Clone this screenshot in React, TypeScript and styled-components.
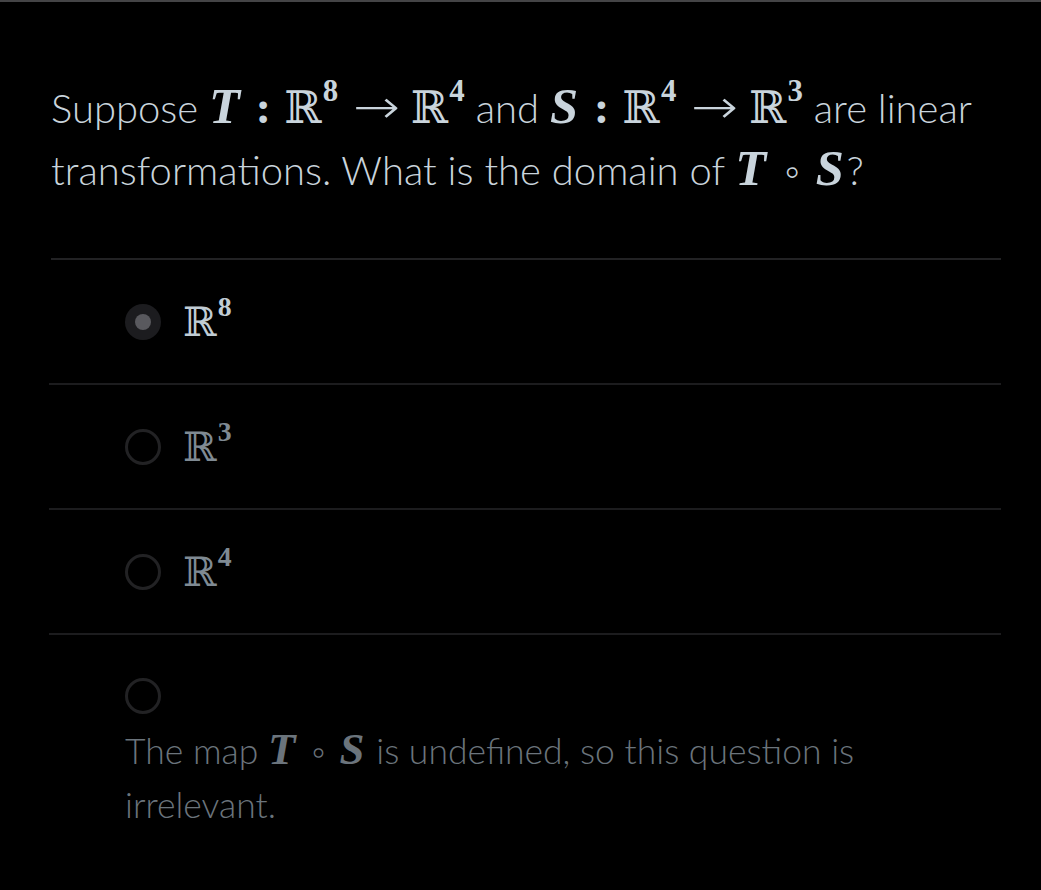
import React from "react";
import styled, { createGlobalStyle } from "styled-components";

const Global = createGlobalStyle`
  html, body { margin: 0; padding: 0; background: #000; }
  body { font-family: "Lato Light", Lato, "Open Sans", sans-serif; }
`;

const Page = styled.div`
  min-height: 890px;
  box-sizing: border-box;
  background: #000;
  border-top: 2px solid #444446;
  padding: 75px 40px 0 49px;
`;

const Question = styled.p`
  margin: 0 0 0 2px;
  font-weight: 300;
  font-size: 40px;
  line-height: 62px;
  color: #c9d4dc;
  padding-bottom: 57px;
  border-bottom: 2px solid #222224;
`;

const MathSpan = styled.span`
  font-family: "Liberation Serif", "DejaVu Serif", serif;
  font-size: 1.17em;
  line-height: 0;
  white-space: nowrap;
`;

const Var = styled.span`
  font-family: "Liberation Serif", serif;
  font-style: italic;
  font-weight: 700;
  font-size: 1.08em;
  margin-right: 0.05em;
`;

const Bb = styled.span`
  font-family: "DejaVu Serif", serif;
  font-weight: 400;
  font-size: 0.96em;
`;

const Sup = styled.span`
  font-family: "Liberation Serif", serif;
  font-weight: 700;
  font-size: 0.66em;
  line-height: 0;
  position: relative;
  top: -0.72em;
  margin-left: 0.04em;
`;

const Rel = styled.span`
  display: inline-block;
  text-align: center;
  font-family: "Liberation Serif", serif;
  font-weight: 700;
  margin: 0 0.28em;
`;

const Arrow = styled(Rel)`
  width: 1.05em;
  margin: 0 0.2em 0 0.3em;
  font-family: "DejaVu Sans", sans-serif;
  font-weight: 300;
  transform: scaleX(1.2);
`;

const Compose = styled.span`
  display: inline-block;
  font-family: "DejaVu Sans", sans-serif;
  font-size: 0.85em;
  margin: 0 0.28em;
`;

const Options = styled.div`
  display: flex;
  flex-direction: column;
`;

const Row = styled.label<{ $stack?: boolean }>`
  display: flex;
  flex-direction: ${(p) => (p.$stack ? "column" : "row")};
  align-items: ${(p) => (p.$stack ? "flex-start" : "center")};
  gap: ${(p) => (p.$stack ? "10px" : "22px")};
  min-height: 125px;
  box-sizing: border-box;
  padding: ${(p) => (p.$stack ? "43px 0 20px 76px" : "0 0 0 76px")};
  border-bottom: ${(p) => (p.$stack ? "none" : "2px solid #1c1c1e")};
`;

const Radio = styled.span<{ $checked?: boolean }>`
  flex: none;
  width: 36px;
  height: 36px;
  border-radius: 50%;
  box-sizing: border-box;
  display: flex;
  align-items: center;
  justify-content: center;
  background: ${(p) => (p.$checked ? "#1c1c1f" : "transparent")};
  border: ${(p) => (p.$checked ? "none" : "3px solid #222224")};
  &::after {
    content: "";
    display: ${(p) => (p.$checked ? "block" : "none")};
    width: 16px;
    height: 16px;
    border-radius: 50%;
    background: #59595e;
  }
`;

const Label = styled.span<{ $tone: string; $long?: boolean }>`
  font-weight: 300;
  font-size: ${(p) => (p.$long ? "35.5px" : "36px")};
  line-height: ${(p) => (p.$long ? "54px" : "58px")};
  color: ${(p) => p.$tone};
`;

const R = ({ n }: { n: number }) => (
  <>
    <Bb>ℝ</Bb>
    <Sup>{n}</Sup>
  </>
);

export default function App() {
  return (
    <>
      <Global />
      <Page>
        <Question>
          Suppose{" "}
          <MathSpan>
            <Var>T</Var>
            <Rel>:</Rel>
            <R n={8} />
            <Arrow>→</Arrow>
            <R n={4} />
          </MathSpan>{" "}
          and{" "}
          <MathSpan>
            <Var>S</Var>
            <Rel>:</Rel>
            <R n={4} />
            <Arrow>→</Arrow>
            <R n={3} />
          </MathSpan>{" "}
          are linear transformations. What is the domain of{" "}
          <MathSpan>
            <Var>T</Var>
            <Compose>∘</Compose>
            <Var>S</Var>
          </MathSpan>
          ?
        </Question>
        <Options>
          <Row>
            <Radio $checked />
            <Label $tone="#c0ccd4">
              <MathSpan>
                <R n={8} />
              </MathSpan>
            </Label>
          </Row>
          <Row>
            <Radio />
            <Label $tone="#7f8a93">
              <MathSpan>
                <R n={3} />
              </MathSpan>
            </Label>
          </Row>
          <Row>
            <Radio />
            <Label $tone="#7f8a93">
              <MathSpan>
                <R n={4} />
              </MathSpan>
            </Label>
          </Row>
          <Row $stack>
            <Radio />
            <Label $tone="#6b747c" $long>
              The map{" "}
              <MathSpan>
                <Var>T</Var>
                <Compose>∘</Compose>
                <Var>S</Var>
              </MathSpan>{" "}
              is undefined, so this question is
              <br />
              irrelevant.
            </Label>
          </Row>
        </Options>
      </Page>
    </>
  );
}
